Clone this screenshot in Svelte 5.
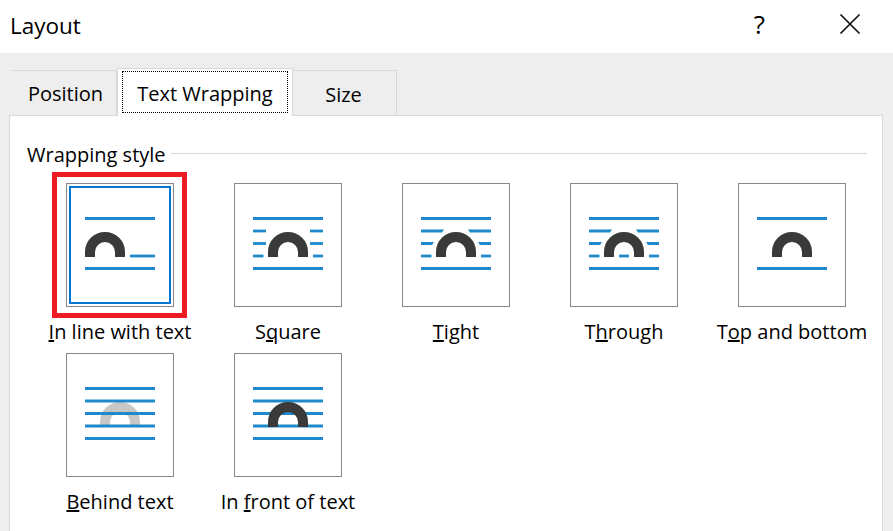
<script>
  const seg = (x1, x2, y, s1 = 0, s2 = 0) => ({ x1, x2, y, s1, s2 });
  const options = [
    { pre: '', key: 'I', post: 'n line with text', cx: 39, selected: true,
      lines: [seg(19, 89, 35.5), seg(64, 89, 73), seg(19, 89, 85.5)] },
    { pre: 'S', key: 'q', post: 'uare', cx: 54,
      lines: [seg(19, 89, 35.5), seg(19, 32, 48), seg(76, 89, 48), seg(19, 32, 60.5), seg(76, 89, 60.5), seg(19, 29.5, 73), seg(79, 89, 73), seg(19, 89, 85.5)] },
    { pre: '', key: 'T', post: 'ight', cx: 54,
      lines: [seg(19, 89, 35.5), seg(19, 42, 48, 0, -2), seg(66, 89, 48, 2, 0), seg(19, 32, 60.5, 0, -2), seg(76, 89, 60.5, 2, 0), seg(19, 29.5, 73), seg(79, 89, 73), seg(19, 89, 85.5)] },
    { pre: 'T', key: 'h', post: 'rough', cx: 54,
      lines: [seg(19, 89, 35.5), seg(19, 42, 48, 0, -2), seg(66, 89, 48, 2, 0), seg(19, 32, 60.5, 0, -2), seg(76, 89, 60.5, 2, 0), seg(19, 29.5, 73), seg(49, 59, 73), seg(79, 89, 73), seg(19, 89, 85.5)] },
    { pre: 'T', key: 'o', post: 'p and bottom', cx: 54,
      lines: [seg(19, 89, 35.5), seg(19, 89, 85.5)] },
    { pre: '', key: 'B', post: 'ehind text', cx: 54, behind: true,
      lines: [35.5, 48, 60.5, 73, 85.5].map((y) => seg(19, 89, y)) },
    { pre: 'In ', key: 'f', post: 'ront of text', cx: 54,
      lines: [35.5, 48, 60.5, 73, 85.5].map((y) => seg(19, 89, y)) }
  ];
  const arc = (cx) => `M${cx - 15} 74V69A15 15 0 0 1 ${cx + 15} 69V74`;
  const bar = (l) => {
    const t = l.y - 1.4, b = l.y + 1.4;
    return `M${l.x1} ${t}H${l.x2}L${l.x2 + l.s2} ${b}H${l.x1 + l.s1}Z`;
  };
</script>

<div class="dialog">
  <header class="titlebar">
    <h1>Layout</h1>
    <div class="controls">
      <span class="help">?</span>
      <svg class="close" width="22" height="22" viewBox="0 0 22 22" aria-hidden="true">
        <path d="M1.5 1.5 20.5 20.5M20.5 1.5 1.5 20.5" />
      </svg>
    </div>
  </header>

  <div class="tabs">
    <div class="tab first">Position</div>
    <div class="tab active"><span class="focus">Text Wrapping</span></div>
    <div class="tab last">Size</div>
  </div>

  <section class="panel">
    <div class="legend"><span>Wrapping style</span><i></i></div>
    <div class="grid">
      {#each options as o}
        <div class="option">
          <div class="thumb" class:selected={o.selected}>
            <svg width="106" height="122" viewBox="1 1 106 122" aria-hidden="true">
              {#if o.behind}
                <path class="arc grey" d={arc(o.cx)} />
              {/if}
              {#each o.lines as l}
                <path class="bar" d={bar(l)} />
              {/each}
              {#if !o.behind}
                <path class="arc" d={arc(o.cx)} />
              {/if}
            </svg>
          </div>
          <div class="label">{o.pre}<u>{o.key}</u>{o.post}</div>
        </div>
      {/each}
    </div>
  </section>
</div>

<style>
  :global(body) {
    margin: 0;
  }
  .dialog {
    width: 893px;
    height: 531px;
    overflow: hidden;
    background: #eeeeee;
    color: #000;
    font-family: "Open Sans", "Noto Sans", sans-serif;
    font-size: 20px;
  }
  .titlebar {
    height: 53px;
    background: #fff;
    display: flex;
    align-items: center;
    justify-content: space-between;
    padding: 0 32px 0 10px;
    box-sizing: border-box;
  }
  h1 {
    margin: 0 0 3px;
    font-size: 22.5px;
    font-weight: 400;
  }
  .controls {
    display: flex;
    align-items: center;
    gap: 74px;
  }
  .help {
    font-size: 26px;
    line-height: 1;
    margin-bottom: 5px;
  }
  .close {
    display: block;
    margin-bottom: 5px;
  }
  .close path {
    fill: none;
    stroke: #111;
    stroke-width: 1.7;
  }
  .tabs {
    display: flex;
    height: 45px;
    margin: 17px 0 0 11px;
    align-items: flex-end;
  }
  .tab {
    box-sizing: border-box;
    height: 45px;
    border-top: 1px solid #d9d9d9;
    border-right: 1px solid #d9d9d9;
    display: flex;
    align-items: center;
    justify-content: center;
    padding-top: 1px;
  }
  .first {
    width: 106px;
    padding-left: 4px;
  }
  .last {
    width: 104px;
    padding-right: 2px;
    padding-top: 2px;
  }
  .active {
    position: relative;
    z-index: 1;
    width: 176px;
    height: 48px;
    margin-bottom: -1px;
    background: #fff;
    border: 1px solid #d9d9d9;
    border-bottom: 0;
    padding: 0 3px 2px;
    flex: none;
  }
  .focus {
    box-sizing: border-box;
    width: 166px;
    height: 42px;
    padding-top: 4px;
    outline: 1px dotted #000;
    outline-offset: -1px;
    display: flex;
    align-items: center;
    justify-content: center;
  }
  .panel {
    box-sizing: border-box;
    height: 421px;
    margin: 0 10px 0 9px;
    background: #fff;
    border: 1px solid #d9d9d9;
    border-bottom: 0;
    padding: 25px 15px 0 17px;
  }
  .legend {
    display: flex;
    align-items: center;
    gap: 5px;
    height: 26px;
  }
  .legend i {
    flex: 1;
    height: 1px;
    margin-bottom: 1px;
    background: #d9d9d9;
  }
  .grid {
    display: grid;
    grid-template-columns: repeat(5, 168px);
    grid-auto-rows: 170px;
    margin: 16px 0 0 9px;
    width: 840px;
  }
  .option {
    display: flex;
    flex-direction: column;
    align-items: center;
  }
  .thumb {
    position: relative;
    box-sizing: border-box;
    width: 108px;
    height: 124px;
    border: 1px solid #86868b;
    background: #fff;
  }
  .thumb svg {
    display: block;
  }
  .thumb.selected::before {
    content: "";
    position: absolute;
    left: 2px;
    top: 2px;
    right: 2px;
    bottom: 2px;
    border: 2px solid #0078d4;
  }
  .thumb.selected::after {
    content: "";
    position: absolute;
    left: -15px;
    top: -12px;
    right: -14px;
    bottom: -12px;
    border: 5px solid #ed1c24;
  }
  .bar {
    fill: #1f8acb;
  }
  .arc {
    fill: none;
    stroke: #3a3a3a;
    stroke-width: 10;
  }
  .arc.grey {
    stroke: #c8c7c6;
  }
  .label {
    margin-top: 11px;
    line-height: 28px;
    white-space: nowrap;
  }
</style>
